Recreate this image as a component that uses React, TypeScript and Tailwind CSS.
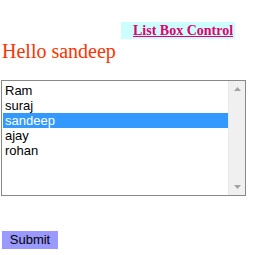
const names = ["Ram", "suraj", "sandeep", "ajay", "rohan"];

export default function App() {
  const selected = "sandeep";
  return (
    <div className="w-[273px] h-[255px] bg-white font-['Liberation_Sans',Arial,sans-serif] text-[13px] text-black">
      <div className="pt-[22px] pl-[121px]">
        <div className="w-[114px] h-[17px] bg-[#ccffff] pl-[12px] font-['Liberation_Serif','Times_New_Roman',serif] text-[14px] leading-[17px] font-bold text-[#e0006e] underline whitespace-nowrap">
          List Box Control
        </div>
      </div>
      <div className="pl-[2px] h-[22px] font-['Liberation_Serif','Times_New_Roman',serif] text-[20px] leading-[24px] text-[#ff3300] whitespace-nowrap">
        Hello sandeep
      </div>
      <div className="mt-[19px] ml-[1px] w-[245px] h-[116px] border border-[#888] flex">
        <div className="flex-1 pt-[2px] pl-[1px]">
          {names.map((n) => (
            <div
              key={n}
              className={`h-[15px] leading-[15px] pl-[2px] ${
                n === selected ? "bg-[#3399ff] text-white" : ""
              }`}
            >
              {n}
            </div>
          ))}
        </div>
        <div className="w-[17px] bg-[#f0f0f0] border-l border-[#e8e8e8] flex flex-col justify-between items-center py-[6px]">
          <svg width="7" height="4" viewBox="0 0 7 4">
            <path d="M3.5 0 L7 4 L0 4 Z" fill="#a3a3a3" />
          </svg>
          <svg width="7" height="4" viewBox="0 0 7 4">
            <path d="M0 0 L7 0 L3.5 4 Z" fill="#a3a3a3" />
          </svg>
        </div>
      </div>
      <div className="mt-[34px] ml-[2px]">
        <button
          type="button"
          className="w-[56px] h-[18px] bg-[#9999ff] text-[13px] leading-[18px] text-black"
        >
          Submit
        </button>
      </div>
    </div>
  );
}
